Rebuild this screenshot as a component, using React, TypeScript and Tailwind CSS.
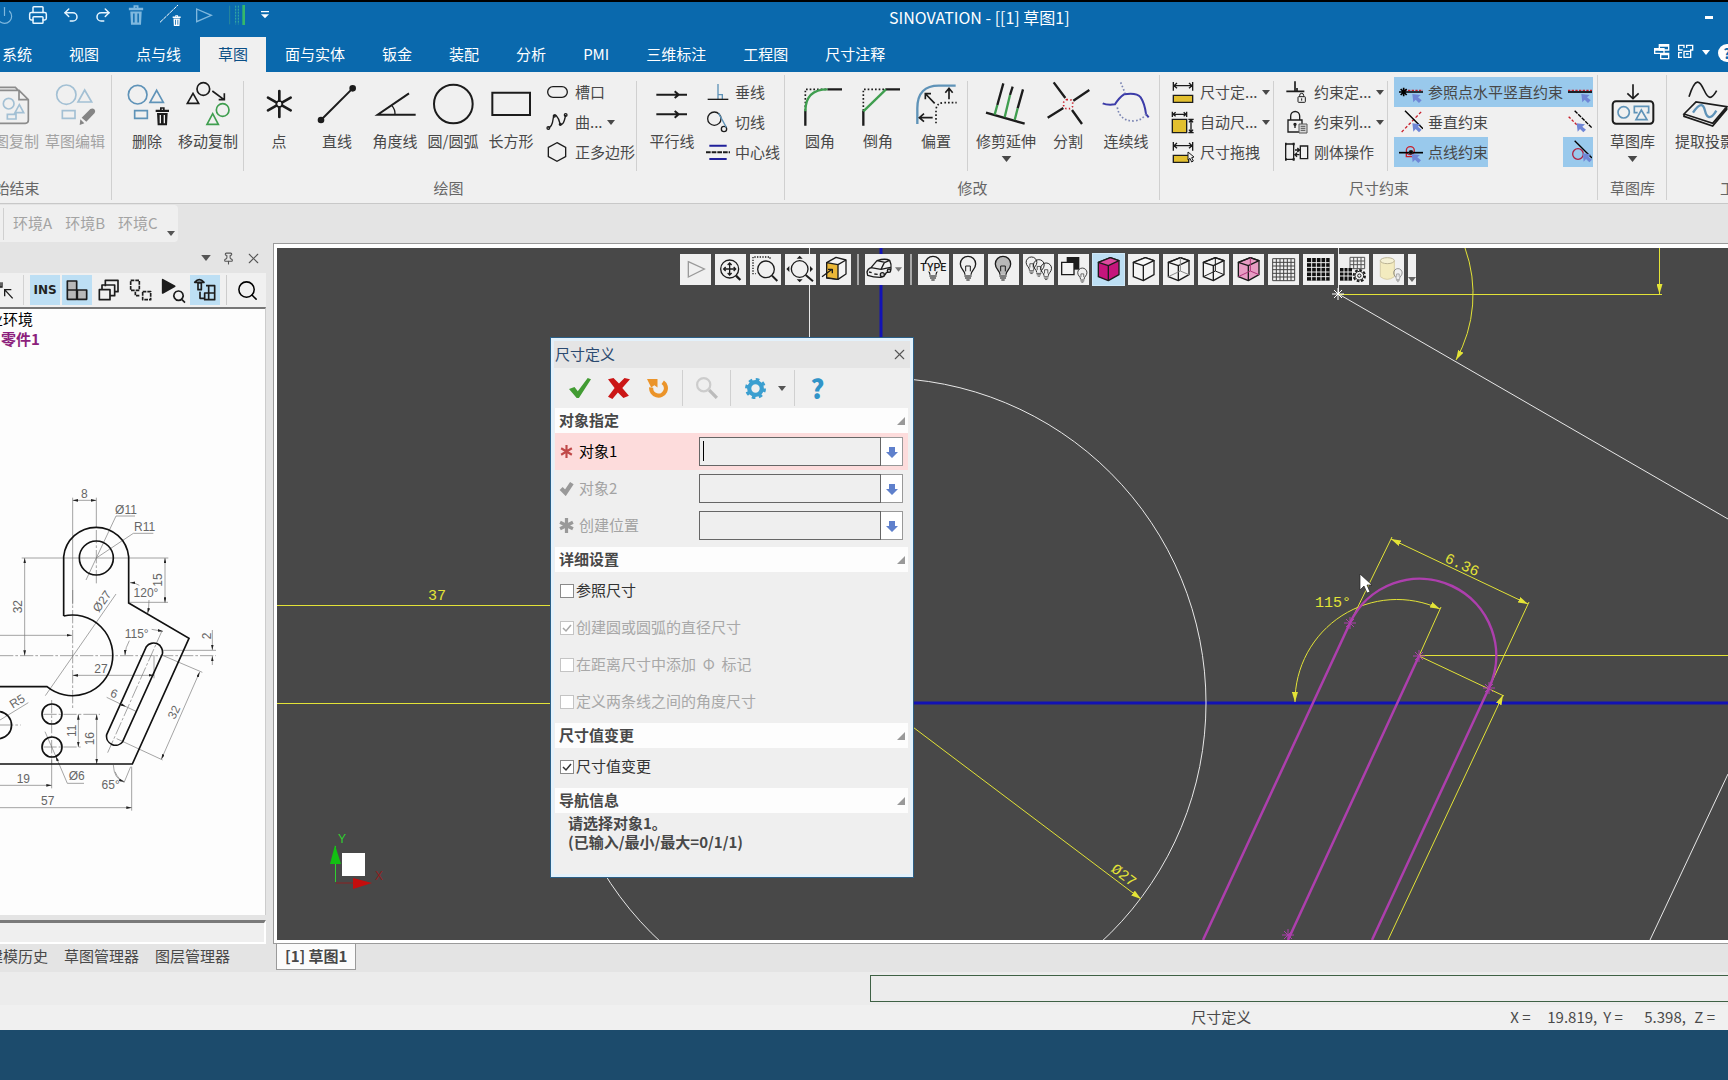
import React from "react";
import { Pin, Power, Printer, Redo2, Search, Undo2, X } from "lucide-react";

const INK = "#1c1c1c";
const GREEN = "#3f9e4f";
const STEEL = "#5f93b8";
const YELLOW = "#e3e337";
const MAGENTA = "#ad3fad";

const TRASH = (
  <path d="M0 8h40v7H0zM13 8V1h14v7h-5V5h-4v3zM4 18h32l-2 37H6zM12 24v25h4V24zM24 24v25h4V24z" fillRule="evenodd" />
);

const POINTER = <path d="M0 0l25 3-8 7 11 9-8 8-10-10-7 8z" fill="#6f86d6" stroke="none" />;

const LOCK = (
  <g fill="#f0f0f0" stroke={INK} strokeWidth="3">
    <path d="M6 12V8a6 6 0 0 1 12 0v4" fill="none" />
    <rect x="1" y="12" width="22" height="17" rx="2" />
    <path d="M12 17v7" />
  </g>
);

// drawn on a 132 unit grid
const BIG: Record<string, React.ReactNode> = {
  copySketch: (
    <g fill="none" stroke="#8c8c8c" strokeWidth="5">
      <path d="M20 22h65l8 8M30 31h66l28 28v62q0 9-9 9H30zM96 31v28h28" />
      <g stroke="#a3c0d4">
        <circle cx="65" cy="71" r="16" />
        <path d="M97 74l13 24H84zM61 103h26v14H61z" />
      </g>
    </g>
  ),
  editSketch: (
    <g fill="none" stroke="#a3c0d4" strokeWidth="5">
      <circle cx="40" cy="44" r="29" />
      <path d="M95 30l21 36H75zM28 92h38v23H28z" />
      <path d="M86 113l26-26q7-4 12 1t1 11l-25 26zM82 118l12 12-14 5z" fill="#858585" stroke="none" />
    </g>
  ),
  remove: (
    <g fill="none" stroke={STEEL} strokeWidth="5">
      <circle cx="38" cy="44" r="28" />
      <path d="M95 31l20 36H75zM29 92h38v23H29z" />
      <g transform="translate(92 81)" fill={INK} stroke="none">{TRASH}</g>
    </g>
  ),
  move: (
    <g fill="none" stroke={INK} strokeWidth="5">
      <circle cx="52" cy="27" r="19" />
      <path d="M21 40l17 30H4zM79 33l35 26M98 59h17V40" />
      <g stroke={GREEN}>
        <circle cx="110" cy="90" r="19" />
        <path d="M80 101l17 32H63z" />
      </g>
    </g>
  ),
  point: (
    <g fill="none" stroke={INK} strokeWidth="8" strokeLinecap="round">
      <circle cx="67" cy="72" r="9" strokeWidth="5" />
      <path d="M67 33v29M67 82v29M33 53l25 14M76 77l25 14M101 53L76 67M58 77L33 91" />
    </g>
  ),
  line: (
    <g stroke={INK} strokeWidth="6" fill={INK}>
      <path d="M18 120L113 25" />
      <circle cx="18" cy="120" r="7" />
      <circle cx="113" cy="25" r="7" />
    </g>
  ),
  angle: (
    <g fill="none" stroke={INK}>
      <path d="M108 40L14 104h114" strokeWidth="6" />
      <path d="M56 76q11 12 10 28" strokeWidth="4" />
    </g>
  ),
  circle: <circle cx="67" cy="72" r="58" fill="none" stroke={INK} strokeWidth="6" />,
  rect: <path d="M10 38h113v67H10z" fill="none" stroke={INK} strokeWidth="6" />,
  parallel: (
    <path d="M19 44h92M19 103h92M74 34l12 10-12 10M74 93l12 10-12 10" fill="none" stroke={INK} strokeWidth="6" />
  ),
  fillet: (
    <g fill="none" strokeWidth="7" stroke={INK}>
      <path d="M22 92V28h66" strokeDasharray="5 6" strokeWidth="5" />
      <path d="M22 92v45M88 28h44" />
      <path d="M22 94Q22 28 88 28" stroke={GREEN} />
    </g>
  ),
  chamfer: (
    <g fill="none" strokeWidth="7" stroke={INK}>
      <path d="M22 92V28h66" strokeDasharray="5 6" strokeWidth="5" />
      <path d="M22 92v45M88 28h44" />
      <path d="M22 94L90 28" stroke={GREEN} />
    </g>
  ),
  offset: (
    <g fill="none" strokeWidth="5" stroke={INK}>
      <path d="M10 132V85Q10 15 78 17h47" stroke={STEEL} strokeWidth="7" />
      <path d="M66 130V92q0-24 24-24h38" strokeDasharray="5 6" />
      <path d="M105 58V26M94 38l11-13 11 13M62 70L35 42M34 58V41h17M56 113H17M30 101l-14 12 14 12" />
    </g>
  ),
  trim: (
    <g fill="none" strokeWidth="7" stroke={INK}>
      <path d="M6 98l116 33M58 10L40 75M86 20l-8 25M117 28l-16 57" />
      <path d="M40 75l-8 29M78 45l-16 67M101 85l-9 35" stroke={GREEN} />
    </g>
  ),
  split: (
    <g fill="none" strokeWidth="7" stroke={INK}>
      <path d="M23 7l35 47M130 30L82 62M5 113l47-29M78 90l30 42" />
      <rect x="53" y="59" width="27" height="27" rx="9" stroke="#c8202c" strokeWidth="5" strokeDasharray="4 7" />
    </g>
  ),
  chain: (
    <g fill="none" strokeWidth="6" stroke="#3c3ca8">
      <path d="M-4 70q14 6 37 3 12-20 27-30 38-6 50 9 12 18 16 50l8 10" />
      <path d="M50 7l13 32M40 82q6 40 48 41 30-2 40-26" stroke="#7c86b4" strokeWidth="5" strokeDasharray="5 6" />
    </g>
  ),
  library: (
    <g fill="none" strokeWidth="5" stroke={INK}>
      <path d="M66 13v42M49 40l17 16 17-16" />
      <rect x="5" y="64" width="122" height="67" rx="10" strokeWidth="6" />
      <circle cx="38" cy="97" r="17" stroke={STEEL} />
      <path d="M80 98H70V79h43v19h-6M91 90l17 29H75z" stroke={STEEL} />
    </g>
  ),
  project: (
    <g fill="none" strokeWidth="5" stroke={INK}>
      <path d="M18 50C38-12 50 2 63 30s22 30 38 2" />
      <path d="M3 102l36-36 92 14-42 50zM3 102v7l86 29 42-50v-8" />
      <path d="M30 98C54 62 62 76 66 92s14 34 34 0" stroke={STEEL} strokeWidth="7" />
    </g>
  ),
};

// drawn on a 72 unit grid
const SMALL: Record<string, React.ReactNode> = {
  slot: <rect x="5" y="20" width="59" height="32" rx="16" />,
  spline: (
    <g>
      <path d="M7 54q12-5 14-25t10-12 11 24q10 10 17-26" />
      <circle cx="7" cy="54" r="4" />
      <circle cx="25" cy="18" r="3" />
      <circle cx="43" cy="43" r="3" />
      <circle cx="59" cy="15" r="4" />
    </g>
  ),
  polygon: <path d="M33 8l26 14v28L33 64 7 50V22z" />,
  perpendicular: (
    <g>
      <path d="M36 12v46M37 44h12v14" stroke={STEEL} />
      <path d="M5 58h62" />
    </g>
  ),
  tangent: (
    <g>
      <circle cx="25" cy="26" r="20" />
      <circle cx="54" cy="57" r="8" />
      <path d="M38 10l23 42" stroke={STEEL} />
    </g>
  ),
  centre: (
    <g strokeWidth="6">
      <path d="M10 17h52M10 57h52" stroke="#20209a" />
      <path d="M0 37h72" strokeDasharray="14 3" />
    </g>
  ),
  dimDefine: (
    <g>
      <path d="M7 6v26M65 6v26M9 17h54M18 9l-9 8 9 8M54 9l9 8-9 8" />
      <path d="M7 46h58v21H7z" fill="#e2bf2f" />
    </g>
  ),
  dimAuto: (
    <g>
      <path d="M4 5v16M47 5v16M6 13h39M14 7l-8 6 8 6M38 7l7 6-7 6M52 28h16M52 68h16M60 30v36M54 37l6-8 6 8M54 59l6 8 6-8" />
      <path d="M4 28h43v40H4z" fill="#e2bf2f" />
    </g>
  ),
  dimDrag: (
    <g>
      <path d="M7 6v26M65 6v26M9 17h54M18 9l-9 8 9 8M54 9l9 8-9 8" />
      <path d="M7 46h46v21H7z" fill="#e2bf2f" />
      <path d="M51 36v24l6-5 5 11 5-3-5-10 7-2z" fill="#f0f0f0" strokeWidth="3" />
    </g>
  ),
  conDefine: (
    <g>
      <path d="M30 4v30M36 24v10M4 34h54" strokeWidth="5" />
      <g transform="translate(38 38)">{LOCK}</g>
    </g>
  ),
  conList: (
    <g>
      <path d="M17 30V18a13 13 0 0 1 27 0v12" />
      <path d="M9 30h42v36H9zM30 40v14" />
      <circle cx="30" cy="43" r="3" />
      <path d="M42 42h24v27H42zM47 49h14M47 55h14M47 61h14" fill="#d8d8d8" stroke="#555" strokeWidth="3" />
    </g>
  ),
  rigid: (
    <g>
      <path d="M2 12h24v46H2zM46 18h22v38H46zM30 30h13M30 44h13M37 24l6 6-6 6M36 38l-6 6 6 6" />
      <path d="M0 12h5M23 12h6M0 58h5M23 58h6" strokeWidth="8" />
    </g>
  ),
  refPoint: (
    <g>
      <path d="M16 31h56" stroke="#c8202c" strokeWidth="4" strokeDasharray="7 4" />
      <path d="M0 36h72M14 23v26M5 27l18 18M23 27L5 45" strokeWidth="5" stroke="#000" />
      <g transform="translate(40 42)">{POINTER}</g>
    </g>
  ),
  refLine: (
    <g>
      <path d="M0 31h72" stroke="#c8202c" strokeWidth="4" strokeDasharray="7 4" />
      <path d="M0 36h72" strokeWidth="5" stroke="#000" />
      <g transform="translate(40 42)">{POINTER}</g>
    </g>
  ),
  vertical: (
    <g>
      <path d="M8 66L70 2" stroke="#c8202c" strokeDasharray="9 6" />
      <path d="M18 2l54 54" stroke="#000" />
      <g transform="translate(40 40)">{POINTER}</g>
    </g>
  ),
  parallelCon: (
    <g>
      <path d="M2 20l26 26" stroke="#c8202c" strokeDasharray="8 5" />
      <path d="M20 2l52 52" stroke="#000" strokeDasharray="12 3" />
      <g transform="translate(26 40)">{POINTER}</g>
    </g>
  ),
  pointLine: (
    <g>
      <circle cx="34" cy="32" r="12" stroke="#c8202c" />
      <path d="M22 36v14h24" stroke="#c8202c" />
      <path d="M0 38h72" stroke="#000" strokeWidth="5" />
      <circle cx="36" cy="37" r="5" fill="#000" />
      <g transform="translate(38 42)">{POINTER}</g>
    </g>
  ),
  tangentCon: (
    <g>
      <circle cx="30" cy="42" r="16" stroke="#b02040" />
      <path d="M20 2l52 52" stroke="#000" />
      <g transform="translate(44 40)">{POINTER}</g>
    </g>
  ),
};

const BULB = (
  <g fill="none" stroke={INK} strokeWidth="4">
    <path d="M36 62c0-12-14-16-14-32a22 22 0 0 1 46 0c0 16-14 20-14 32" />
    <path d="M34 66h22M36 72h18M40 78h10" stroke="#555" />
    <path d="M38 52V36h14v16" strokeWidth="3" />
  </g>
);

const cube = (fill: string, top: string, wire?: string) => (
  <g stroke={INK} strokeWidth="4" strokeLinejoin="round">
    <path d="M16 25L52 11l26 9v42L46 80 16 68z" fill={fill} />
    <path d="M16 25L52 11l26 9-32 15z" fill={top} />
    <path d="M46 35v45" />
    {wire && <path d="M52 11v40L16 68M52 51l26 11" fill="none" stroke={wire} strokeWidth="3" />}
  </g>
);

const GRID = "M14 14h66v66H14zM25 14v66M36 14v66M47 14v66M58 14v66M69 14v66M14 25h66M14 36h66M14 47h66M14 58h66M14 69h66";

// drawn on a 93 unit grid
const VIEW: Record<string, React.ReactNode> = {
  play: <path d="M25 23l48 22-48 24z" fill="none" stroke="#9a9a9a" strokeWidth="4" />,
  zoomAll: (
    <g fill="none" stroke={INK} strokeWidth="4">
      <circle cx="44" cy="45" r="27" />
      <path d="M63 65l13 13" strokeWidth="7" />
      <path d="M44 27v36M26 45h36M38 33l6-6 6 6M38 57l6 6 6-6M32 39l-6 6 6 6M56 39l6 6-6 6" strokeWidth="4" />
    </g>
  ),
  zoomWindow: (
    <g fill="none" stroke={INK} strokeWidth="4">
      <path d="M60 14V9H9v50h8" strokeDasharray="4 4" />
      <circle cx="48" cy="46" r="25" />
      <path d="M66 65l16 16" strokeWidth="6" />
    </g>
  ),
  zoomFit: (
    <g fill="none" stroke={INK} strokeWidth="4">
      <circle cx="44" cy="45" r="25" />
      <path d="M62 63l22 19" strokeWidth="6" />
      <path d="M44 5l9 9H35zM44 85l9-9H35zM4 45l9-9v18zM84 45l-9-9v18z" fill={INK} stroke="none" />
    </g>
  ),
  face: (
    <g fill="none" stroke={INK} strokeWidth="4" strokeLinejoin="round">
      <path d="M20 26L48 10l30 8v42L54 76l-34-4z" fill="#f4f4f4" />
      <path d="M20 26l34 6v44l-34-5z" fill="#ecb838" />
      <path d="M54 32l24-14M6 68l30-22M24 46h13v12" />
    </g>
  ),
  bulb: BULB,
  bulbOff: (
    <g>
      <path d="M36 62c0-12-14-16-14-32a22 22 0 0 1 46 0c0 16-14 20-14 32z" fill="#b8b8b8" />
      {BULB}
    </g>
  ),
  bulbType: (
    <g>
      {BULB}
      <path d="M6 29h82v24H6z" fill="#f0f0f0" />
      <text x="7" y="52" fontSize="32" fontFamily="Roboto" fontWeight="500" fill={INK}>TYPE</text>
    </g>
  ),
  bulbs: (
    <g>
      <g transform="translate(-6 4) scale(.7)">{BULB}</g>
      <g transform="translate(16 12) scale(.7)">{BULB}</g>
      <g transform="translate(38 22) scale(.7)">{BULB}</g>
    </g>
  ),
  layers: (
    <g>
      <path d="M26 9h38v38H26z" fill={INK} />
      <path d="M11 25h37v37H11z" fill="#f4f4f4" stroke={INK} strokeWidth="4" />
      <g transform="translate(46 38) scale(.6)">{BULB}</g>
    </g>
  ),
  solid: cube("#c5157c", "#dd4a9e"),
  plain: cube("#f4f4f4", "#fafafa"),
  hidden: cube("#f4f4f4", "none", "#888"),
  wire: cube("#f4f4f4", "none", INK),
  shadedWire: cube("#e79cc3", "none", "#b0357a"),
  grid: <path d={GRID} fill="none" stroke="#444" strokeWidth="3" />,
  gridDark: (
    <g>
      <path d="M12 12h68v68H12z" fill="#111" />
      <path d="M26 12v68M40 12v68M54 12v68M68 12v68M12 26h68M12 40h68M12 54h68M12 68h68" stroke="#eee" strokeWidth="3" />
    </g>
  ),
  gridSet: (
    <g>
      <path d="M36 10h44v34H36zM47 10v34M58 10v34M69 10v34M36 21h44M36 32h44" fill="none" stroke="#555" strokeWidth="3" />
      <path d="M6 42h36v38H6z" fill="#111" />
      <path d="M18 42v38M30 42v38M6 54h36M6 66h36" stroke="#eee" strokeWidth="3" />
      <circle cx="64" cy="65" r="17" fill="none" stroke={INK} strokeWidth="6" strokeDasharray="8 5" />
      <circle cx="64" cy="65" r="13" fill="#eee" stroke={INK} strokeWidth="3" />
      <circle cx="64" cy="65" r="5" fill="none" stroke={INK} strokeWidth="3" />
    </g>
  ),
  cylinder: (
    <g opacity=".6">
      <path d="M22 20v48q20 16 42 0V20" fill="#f6e9a0" stroke="#c8b878" strokeWidth="3" />
      <ellipse cx="43" cy="20" rx="21" ry="9" fill="#f9f2c4" stroke="#998c58" strokeWidth="3" />
      <g transform="translate(50 40) scale(.55)">{BULB}</g>
    </g>
  ),
};

const Caret = ({ className = "" }: { className?: string }) => (
  <svg viewBox="0 0 8 5" className={`h-[5px] w-2 shrink-0 ${className}`}>
    <path d="M0 0h8L4 5z" fill="currentColor" />
  </svg>
);

interface BigButtonProps {
  icon: string;
  label: string;
  width?: string;
  muted?: boolean;
  menu?: boolean;
}

const BigButton = ({ icon, label, width = "w-[58px]", muted, menu }: BigButtonProps) => (
  <button className={`flex shrink-0 flex-col items-center pt-[3px] whitespace-nowrap ${width} ${muted ? "text-[#a3a3a3]" : "text-[#484848]"}`}>
    <svg viewBox="0 0 132 132" className="size-11 overflow-visible">{BIG[icon]}</svg>
    <span className="mt-[7px] leading-5">{label}</span>
    {menu && <Caret className="mt-[5px] h-[6px] w-[11px]" />}
  </button>
);

interface SmallButtonProps {
  icon: string;
  label?: string;
  menu?: boolean;
  active?: boolean;
  className?: string;
}

const SmallButton = ({ icon, label, menu, active, className = "" }: SmallButtonProps) => (
  <button aria-label={label || icon} className={`flex h-[30px] items-center whitespace-nowrap text-[#484848] ${active ? "bg-[#99c9ec]" : ""} ${className}`}>
    <svg viewBox="0 0 72 72" className="size-6 shrink-0" fill="none" stroke={INK} strokeWidth="4">
      {SMALL[icon]}
    </svg>
    {label && <span className="ml-[5px]">{label}</span>}
    {menu && <Caret className="ml-1" />}
  </button>
);

const Divider = () => <div className="mt-1 h-[90px] w-px shrink-0 bg-[#d0d0d0]" />;

const Group = ({ title, className = "", children }: { title: string; className?: string; children: React.ReactNode }) => (
  <section className={`relative shrink-0 pt-[5px] after:absolute after:top-[3px] after:right-0 after:h-[125px] after:w-px after:bg-[#d0d0d0] ${className}`}>
    <div className="flex h-24 items-start">{children}</div>
    <h2 className="text-center leading-[30px] whitespace-nowrap text-[#666]">{title}</h2>
  </section>
);

const TitleBar = () => (
  <header className="border-t-2 border-black bg-[#0a69ad] text-white">
    <div className="relative flex h-[35px] items-start">
      <div className="flex h-[26px] w-[269px] items-center justify-end gap-[14px] overflow-hidden text-[#e8f6ff]">
        <button aria-label="关闭" className="text-[#7fb8de]"><Power size={19} strokeWidth={1.5} /></button>
        <button aria-label="打印"><Printer size={20} strokeWidth={1.8} /></button>
        <button aria-label="撤销"><Undo2 size={18} /></button>
        <button aria-label="重做"><Redo2 size={18} /></button>
        <button aria-label="删除">
          <svg viewBox="-8 0 56 56" className="size-5" fill="#7fb8de">{TRASH}</svg>
        </button>
        <button aria-label="删除线">
          <svg viewBox="0 0 60 60" className="size-5 overflow-visible">
            <path d="M0 52L54 0" stroke="#fff" strokeWidth="3" strokeDasharray="12 2" />
            <g transform="translate(38 30) scale(.6)" fill="#fff">{TRASH}</g>
          </svg>
        </button>
        <button aria-label="播放">
          <svg viewBox="0 0 57 60" className="h-5 w-[19px]">
            <path d="M8 12l44 19L8 50z" fill="none" stroke="#7fb8de" strokeWidth="4" />
          </svg>
        </button>
        <button aria-label="线型">
          <svg viewBox="0 0 60 60" className="size-5">
            <path d="M8 2v56" stroke="#2a8a9a" strokeWidth="3" />
            <path d="M26 2v56M34 2v56" stroke="#3ab0a0" strokeWidth="3" strokeDasharray="6 3" />
            <path d="M50 0v60" stroke="#35b86a" strokeWidth="8" />
          </svg>
        </button>
        <button aria-label="更多" className="w-3">
          <svg viewBox="0 0 24 24" className="size-2"><path d="M0 0h24v4H0zM0 10h24L12 22z" fill="#fff" /></svg>
        </button>
      </div>
      <h1 className="absolute top-[3px] left-[889px] text-base leading-6 whitespace-nowrap">SINOVATION - [[1] 草图1]</h1>
      <button aria-label="最小化" className="mt-[14px] mr-[15px] ml-auto h-[3px] w-2 bg-white" />
    </div>
    <nav className="flex h-[35px] items-stretch gap-px overflow-hidden">
      {["系统", "视图", "点与线", "草图", "面与实体", "钣金", "装配", "分析", "PMI", "三维标注", "工程图", "尺寸注释"].map((tab) => (
        <button
          key={tab}
          className={`shrink-0 px-[18px] first:pl-[2px] ${tab === "草图" ? "bg-[#f0f0f0] text-[#0b4f86]" : ""}`}
        >
          {tab}
        </button>
      ))}
      <div className="-mr-2 ml-auto flex items-center gap-2 pb-1">
        <svg viewBox="0 0 48 48" className="mb-[2px] size-4" fill="none" stroke="#fff" strokeWidth="4">
          <path d="M16 2h28v16H16zM2 14h28v14H2zM20 28h24v16H20z" fill="#0a69ad" />
          <path d="M16 5h28M2 17h28M20 31h24" strokeWidth="6" />
        </svg>
        <svg viewBox="0 0 48 48" className="mb-[2px] size-4" fill="none" stroke="#fff" strokeWidth="4">
          <path d="M14 18H2V4h16v8M26 12V4h18v14h-8M12 40H2V26h10M18 22h20v18H18zM24 30h8" />
        </svg>
        <Caret />
        <button aria-label="帮助" className="size-[18px] rounded-full bg-white text-sm leading-[18px] font-bold text-[#0a69ad]">?</button>
      </div>
    </nav>
  </header>
);

const Ribbon = () => (
  <div className="flex overflow-hidden border-b border-[#c8c8c8] bg-[#f0f0f0]">
    <Group title="开始结束" className="-ml-[93px] w-[205px]">
      <div className="ml-auto flex pr-1">
        <BigButton icon="copySketch" label="草图复制" width="w-[66px]" muted />
        <BigButton icon="editSketch" label="草图编辑" width="w-[66px]" muted />
      </div>
    </Group>
    <Group title="绘图" className="w-[673px]">
      <div className="flex w-[131px] pl-[6px]">
        <BigButton icon="remove" label="删除" />
        <BigButton icon="move" label="移动复制" width="w-16" />
      </div>
      <Divider />
      <div className="flex pl-[6px]">
        <BigButton icon="point" label="点" />
        <BigButton icon="line" label="直线" />
        <BigButton icon="angle" label="角度线" />
        <BigButton icon="circle" label="圆/圆弧" />
        <BigButton icon="rect" label="长方形" />
      </div>
      <div className="w-[96px] pl-[6px]">
        <SmallButton icon="slot" label="槽口" />
        <SmallButton icon="spline" label="曲..." menu />
        <SmallButton icon="polygon" label="正多边形" />
      </div>
      <Divider />
      <div className="flex pl-[6px]">
        <BigButton icon="parallel" label="平行线" />
        <div className="pl-[5px]">
          <SmallButton icon="perpendicular" label="垂线" />
          <SmallButton icon="tangent" label="切线" />
          <SmallButton icon="centre" label="中心线" />
        </div>
      </div>
    </Group>
    <Group title="修改" className="w-[375px]">
      <div className="flex w-[182px] pl-[6px]">
        <BigButton icon="fillet" label="圆角" />
        <BigButton icon="chamfer" label="倒角" />
        <BigButton icon="offset" label="偏置" />
      </div>
      <Divider />
      <div className="flex pl-[6px]">
        <BigButton icon="trim" label="修剪延伸" width="w-16" menu />
        <BigButton icon="split" label="分割" width="w-[60px]" />
        <BigButton icon="chain" label="连续线" width="w-14" />
      </div>
    </Group>
    <Group title="尺寸约束" className="w-[438px]">
      <div className="w-[113px] pl-[11px]">
        <SmallButton icon="dimDefine" label="尺寸定..." menu />
        <SmallButton icon="dimAuto" label="自动尺..." menu />
        <SmallButton icon="dimDrag" label="尺寸拖拽" />
      </div>
      <Divider />
      <div className="w-[113px] pl-[11px]">
        <SmallButton icon="conDefine" label="约束定..." menu />
        <SmallButton icon="conList" label="约束列..." menu />
        <SmallButton icon="rigid" label="刚体操作" />
      </div>
      <Divider />
      <div className="ml-[6px] w-[199px]">
        <div className="flex bg-[#99c9ec]">
          <SmallButton icon="refPoint" label="参照点水平竖直约束" className="pl-[5px]" />
          <SmallButton icon="refLine" className="ml-auto pr-px" />
        </div>
        <div className="flex">
          <SmallButton icon="vertical" label="垂直约束" className="pl-[5px]" />
          <SmallButton icon="parallelCon" className="ml-auto pr-px" />
        </div>
        <div className="flex">
          <SmallButton icon="pointLine" label="点线约束" active className="pl-[5px]" />
          <SmallButton icon="tangentCon" active className="ml-auto pr-px pl-[5px]" />
        </div>
      </div>
    </Group>
    <Group title="草图库" className="w-[69px]">
      <BigButton icon="library" label="草图库" width="w-[69px]" menu />
    </Group>
    <Group title="工具" className="w-[136px]">
      <BigButton icon="project" label="提取投影" width="w-[76px]" />
    </Group>
  </div>
);

const EnvironmentBar = () => (
  <div className="flex h-[39px] bg-[#e4e4e4] pt-px">
    <div className="flex h-[37px] items-center gap-[13px] rounded-r bg-[#efefef] pr-[3px] pl-[3px] text-[#a3a3a3]">
      <div className="-mr-1 h-8 w-px bg-[#d0d0d0]" />
      <button>环境A</button>
      <button>环境B</button>
      <button>环境C</button>
      <Caret className="-ml-1 mt-5 text-[#555]" />
    </div>
  </div>
);

const DimText = ({ x, y, r = 0, children }: { x: number; y: number; r?: number; children: React.ReactNode }) => (
  <text x={x} y={y} transform={`rotate(${r} ${x} ${y})`} textAnchor="middle">{children}</text>
);

const PART_DIMS = [
  "M218 91h71",
  "M74 264v293",
  "M495 264v134",
  "M218 616h244",
  "M235 733v98",
  "M290 733v149",
  "M599 606L484 868",
];

const PART_LEADERS = [
  "M0 496h216",
  "M0 946h155",
  "M0 1013h395",
  "M637 480v60",
  "M637 585v-27",
  "M418 346q-12-8-28-8",
  "M447 390q0 22-4 40",
  "M388 512q-12 20-13 44",
  "M455 478l34 6",
  "M345 905q10 24 28 30",
  "M372 93L289 460",
  "M202 940L167 858",
  "M320 682l58 28",
];

const PartDrawing = () => (
  <svg viewBox="0 0 795 1080" className="h-[360px] w-[265px]" fill="none">
    <defs>
      <marker id="tip" viewBox="0 0 16 8" refX="16" refY="4" markerWidth="16" markerHeight="8" markerUnits="userSpaceOnUse" orient="auto-start-reverse">
        <path d="M0 0l16 4-16 4z" fill="#222" />
      </marker>
    </defs>
    <g stroke="#777" strokeWidth="2">
      <path d="M218 83v320M289 83v90M65 264h440M389 397h115M395 890v132M155 865v90M490 541h158M462 555v70" />
      <path d="M218 360v360M289 180v160M0 557h648M130 733h170M130 831h112M0 765h62M155 690v190M323 848L488 478" strokeDasharray="40 6 8 6" />
      <path d="M405 138h-57l-90 192M460 190h-60L289 264M348 372L136 677M85 698L0 750M135 785l32 73M202 940h50M378 710l30 14M350 806l138 64M490 557l117 50M372 938l20-48M340 885q2 42 32 51" />
      {PART_DIMS.map((d) => <path key={d} d={d} markerStart="url(#tip)" markerEnd="url(#tip)" />)}
      {PART_LEADERS.filter((d) => d !== "M372 93L289 460").map((d) => <path key={d} d={d} markerEnd="url(#tip)" />)}
    </g>
    <g stroke="#111" strokeWidth="5">
      <path d="M191 438V260a98 98 0 0 1 195 0v139l181 106-170 377H0M191 438a121 121 0 1 1-50 212H0" />
      <circle cx="289" cy="264" r="51" />
      <circle cx="156" cy="732" r="30" />
      <circle cx="156" cy="831" r="30" />
      <path d="M0 725a41 41 0 0 1 0 81M320 794L439 530a27 27 0 0 1 48 22L368 815a27 27 0 0 1-48-21z" />
    </g>
    <g fill="#666" fontFamily="Liberation Sans" fontSize="36">
      <DimText x={253} y={84}>8</DimText>
      <DimText x={378} y={131}>Ø11</DimText>
      <DimText x={434} y={183}>R11</DimText>
      <DimText x={487} y={330} r={-90}>15</DimText>
      <DimText x={438} y={380}>120°</DimText>
      <DimText x={67} y={410} r={-90}>32</DimText>
      <DimText x={316} y={401} r={-55}>Ø27</DimText>
      <DimText x={410} y={504}>115°</DimText>
      <DimText x={632} y={498} r={-90}>2</DimText>
      <DimText x={303} y={608}>27</DimText>
      <DimText x={338} y={682} r={20}>6</DimText>
      <DimText x={533} y={732} r={-65}>32</DimText>
      <DimText x={58} y={704} r={-32}>R5</DimText>
      <DimText x={227} y={782} r={-90}>11</DimText>
      <DimText x={283} y={806} r={-90}>16</DimText>
      <DimText x={230} y={930}>Ø6</DimText>
      <DimText x={70} y={938}>19</DimText>
      <DimText x={332} y={958}>65°</DimText>
      <DimText x={143} y={1005}>57</DimText>
    </g>
  </svg>
);

const panelTool = "flex size-[30px] shrink-0 items-center justify-center";

const PANEL_TOOLS = [
  { name: "零件", on: true, fill: "#b8b8b8", d: "M16 18h28v27H16zM16 45h28v28H16zM46 45h28v28H46z" },
  { name: "复制", d: "M34 34V16h38v34H60M24 46V30h38v32H50M16 44h32v30H16z" },
  { name: "展开", dash: "11 3", d: "M14 16h26v30H14zM28 50v12h12M50 50h24v24H50z" },
  { name: "播放搜索", d: "M62 48a14 14 0 1 1-1 0zM72 74l9 9" },
  { name: "结构", on: true, d: "M14 22q14-16 28 0zM24 24h10v20H24zM30 50v20h12M48 32h26v42H44V54h30M56 32v42" },
];

const SidePanel = () => (
  <aside className="flex w-[273px] shrink-0 flex-col bg-[#e4e4e4]">
    <div className="flex h-[30px] items-center justify-end gap-[10px] pr-[11px] text-[#555]">
      <button aria-label="菜单"><Caret className="h-[6px] w-3" /></button>
      <button aria-label="固定"><Pin size={13} /></button>
      <button aria-label="关闭面板"><X size={17} strokeWidth={1.5} /></button>
    </div>
    <div className="mr-[7px] flex h-[34px] items-center gap-[2px] overflow-hidden bg-[#f0f0f0]">
      <svg viewBox="0 0 72 90" className="mr-1 h-[30px] w-6 shrink-0" fill="none" stroke={INK} strokeWidth="4">
        <path d="M0 22v14h6V22M38 70L16 46M14 64V44h20" />
        <path d="M71 0v90" stroke="#ccc" strokeWidth="3" />
      </svg>
      <button className={`${panelTool} bg-[#bddff4] font-['DejaVu_Sans'] text-[12px] font-bold text-[#222]`}>INS</button>
      {PANEL_TOOLS.map((tool) => (
        <button key={tool.name} aria-label={tool.name} className={`${panelTool} ${tool.on ? "bg-[#bddff4]" : ""}`}>
          <svg viewBox="0 0 90 90" className="size-[30px]" fill={tool.fill || "none"} stroke={INK} strokeWidth="5" strokeLinejoin="round">
            <path d={tool.d} strokeDasharray={tool.dash} />
            {tool.name === "播放搜索" && <path d="M14 14l36 20-36 20z" fill={INK} />}
          </svg>
        </button>
      ))}
      <div className="ml-1 h-[30px] w-px shrink-0 bg-[#ccc]" />
      <button aria-label="查找" className={`${panelTool} ml-[3px]`}><Search size={23} strokeWidth={1.6} /></button>
    </div>
    <div className="mr-[7px] min-h-0 flex-1 overflow-hidden border-t-2 border-r border-t-[#777] border-r-[#ccc] bg-[#fdfdfd]">
      <div className="-ml-[27px] h-5 leading-5 text-black">作业环境</div>
      <div className="h-5 pl-px leading-5 font-bold text-[#8c1f7c]">零件1</div>
      <div className="h-[121px]" />
      <PartDrawing />
    </div>
    <div className="mt-[5px] mr-[7px] h-6 border-t-[3px] border-r-2 border-b-2 border-t-[#7a7a7a] border-r-white border-b-white bg-[#efefef]" />
    <div className="flex h-7 gap-4 overflow-hidden leading-[24px] whitespace-nowrap text-[#484848]">
      <button className="-ml-3 self-start">建模历史</button>
      <button className="self-start">草图管理器</button>
      <button className="self-start">图层管理器</button>
    </div>
  </aside>
);

const Star = ({ x, y, color }: { x: number; y: number; color: string }) => (
  <path d={`M${x - 6} ${y}h12M${x} ${y - 6}v12M${x - 4} ${y - 4}l8 8M${x + 4} ${y - 4}l-8 8`} stroke={color} strokeWidth="1" />
);

const SKETCH_LEADERS = [
  "M881 703l260 196",
  "M1659.500 248v46",
  "M1465 248a136 136 0 0 1-9 112",
  "M1388 940l115-245",
];

const SKETCH_DIMS = ["M1391 539l137 65", "M1295 702a102 102 0 0 1 145-93"];

const SketchView = () => (
  <svg viewBox="277 248 1451 692" preserveAspectRatio="xMidYMid slice" className="absolute inset-0 size-full" fill="none">
    <defs>
      <marker id="arrow" viewBox="0 0 10 6" refX="10" refY="3" markerWidth="10" markerHeight="6" markerUnits="userSpaceOnUse" orient="auto-start-reverse">
        <path d="M0 0l10 3-10 3z" fill={YELLOW} />
      </marker>
    </defs>
    <path d="M881 248v455h847" stroke="#1212b4" strokeWidth="3" />
    <g stroke="#e8e8e8" strokeWidth="1">
      <circle cx="881" cy="703" r="325" />
      <path d="M809.500 248v200M1338.500 248v46L1728 519M1728 774l-78 166" />
    </g>
    <g stroke={YELLOW} strokeWidth="1">
      <path d="M277 605.500h300M277 703.500h300M1338 294.500h324M1419 655.500h309M1350 623l42-86M1489 688l40-86M1419 656l22-49M1419 656l85 40" />
      {SKETCH_LEADERS.map((d) => <path key={d} d={d} markerEnd="url(#arrow)" />)}
      {SKETCH_DIMS.map((d) => <path key={d} d={d} markerStart="url(#arrow)" markerEnd="url(#arrow)" />)}
    </g>
    <path d="M1203 940l147-317a76 76 0 0 1 139 65l-117 252M1419 656l-131 284" stroke={MAGENTA} strokeWidth="2.500" />
    <Star x={1350} y={623} color={MAGENTA} />
    <Star x={1419} y={656} color={MAGENTA} />
    <Star x={1489} y={688} color={MAGENTA} />
    <Star x={1288} y={935} color={MAGENTA} />
    <Star x={1338} y={294} color="#fff" />
    <g fill={YELLOW} fontFamily="Liberation Mono" fontSize="15">
      <DimText x={437} y={600}>37</DimText>
      <DimText x={1460} y={569} r={25}>6.36</DimText>
      <DimText x={1333} y={607}>115°</DimText>
      <DimText x={1121} y={879} r={37}>Ø27</DimText>
    </g>
    <path d="M335.500 846v36" stroke="#2fd02f" />
    <path d="M335 845l6 19h-11z" fill="#12c012" />
    <path d="M336 883h20" stroke="#8a2020" />
    <path d="M353 878l19 5-19 6z" fill="#c40d0d" />
    <path d="M342 853h23v23h-23z" fill="#fff" />
    <text x="338" y="843" fontSize="12" fontFamily="Liberation Sans" fill="#2fd02f">Y</text>
    <text x="375" y="880" fontSize="12" fontFamily="Liberation Sans" fill="#8f1f1f">X</text>
    <path d="M1360 574v16l4-4 3 7 3-1-3-7h5z" fill="#fff" stroke="#222" strokeWidth=".7" />
  </svg>
);

const ViewButton = ({ icon, active }: { icon: string; active?: boolean }) => (
  <button aria-label={icon} className={`size-[31px] shrink-0 ${active ? "bg-[#bddff4] ring-1 ring-[#cfe8f8]" : "bg-[#f0f0f0]"}`}>
    <svg viewBox="0 0 93 93" className="size-[31px]">{VIEW[icon]}</svg>
  </button>
);

const ViewToolbar = () => (
  <div className="absolute top-[6px] left-[403px] flex gap-1">
    {["play", "zoomAll", "zoomWindow", "zoomFit", "face"].map((icon) => <ViewButton key={icon} icon={icon} />)}
    <div className="mx-0.5 w-0.5 bg-[#a8a8a8]" />
    <button aria-label="视角" className="flex h-[31px] w-[39px] items-center bg-[#f0f0f0] text-[#777]">
      <svg viewBox="0 0 90 93" className="h-[31px] w-[30px]" fill="none" stroke={INK} strokeWidth="4" strokeLinejoin="round">
        <path d="M6 54q2-10 12-13l18-21q24-8 38-1 6 12 4 26-2 8-14 11-6 12-18 14-22 0-38-6zM18 41l30 5 10-20M48 46l28-6M36 20l24 5 14-6" />
        <path d="M12 54l8 2M28 60l10 1" />
        <circle cx="52" cy="62" r="6" fill="#ccc" />
        <circle cx="72" cy="50" r="5" fill="#ccc" />
      </svg>
      <Caret className="w-[7px]" />
    </button>
    <div className="mx-0.5 w-0.5 bg-[#a8a8a8]" />
    {["bulbType", "bulb", "bulbOff", "bulbs", "layers", "solid", "plain", "hidden", "wire", "shadedWire", "grid", "gridDark", "gridSet", "cylinder"].map(
      (icon) => <ViewButton key={icon} icon={icon} active={icon === "solid"} />
    )}
    <button aria-label="更多视图" className="flex w-2 items-end bg-[#f0f0f0] pb-[3px] text-[#666]"><Caret /></button>
  </div>
);

const SectionTitle = ({ children }: { children: React.ReactNode }) => (
  <h3 className="flex h-[25px] items-center justify-between bg-[#fdfdfd] pr-[3px] pl-1 font-bold text-[#484848]">
    {children}
    <svg viewBox="0 0 8 8" className="size-2"><path d="M8 0v8H0z" fill="#999" /></svg>
  </h3>
);

const MARKS: Record<string, React.ReactNode> = {
  red: <path d="M7 1v12M2 4l10 6M12 4L2 10" stroke="#c04848" strokeWidth="2" />,
  tick: <path d="M2 7l4 4 6-9" stroke="#999" strokeWidth="4" fill="none" />,
  gray: <path d="M7 0v14M1 4l12 6M13 4L1 10" stroke="#999" strokeWidth="3" />,
};

const Field = ({ id, label, mark, active }: { id: string; label: string; mark: string; active?: boolean }) => (
  <div className={`flex h-[37px] items-center pr-[5px] pl-1 ${active ? "bg-[#fddcdc]" : ""}`}>
    <svg viewBox="0 0 14 14" className="size-[15px]">{MARKS[mark]}</svg>
    <label htmlFor={id} className={`ml-[5px] flex-1 ${active ? "text-black" : "text-[#a3a3a3]"}`}>{label}</label>
    <div className="relative flex">
      <input id={id} type="text" className="h-[29px] w-[182px] border border-[#666] bg-[#efefef] px-1 outline-none" />
      {active && <span className="absolute top-1 left-1 h-5 w-px bg-black" />}
      <button aria-label={`${label} 选择`} className="flex h-[29px] w-[22px] items-center justify-center border border-l-0 border-[#999] bg-white">
        <svg viewBox="0 0 12 12" className="size-3"><path d="M3 1h6v5h3l-6 6-6-6h3z" fill="#5f80cc" /></svg>
      </button>
    </div>
  </div>
);

const Check = ({ label, checked, disabled }: { label: string; checked?: boolean; disabled?: boolean }) => (
  <label className={`flex h-[37px] items-center gap-[2px] pl-[5px] whitespace-pre ${disabled ? "text-[#a8a8a8]" : "text-[#333]"}`}>
    <span className="relative size-[14px]">
      <input
        type="checkbox"
        defaultChecked={checked}
        disabled={disabled}
        className={`peer block size-[14px] appearance-none border bg-white ${disabled ? "border-[#c4c4c4]" : "border-[#8a8a8a]"}`}
      />
      <svg viewBox="0 0 14 14" className="pointer-events-none absolute inset-0 hidden size-[14px] peer-checked:block">
        <path d="M3 7l3 3 5-6" fill="none" stroke="currentColor" strokeWidth="1.500" />
      </svg>
    </span>
    {label}
  </label>
);

const DimensionDialog = () => (
  <div role="dialog" aria-label="尺寸定义" className="absolute top-[90px] left-[274px] h-[539px] w-[362px] border-[3px] border-[#e3f1fb] bg-[#efefef] ring-1 ring-[#2b5f86]">
    <div className="flex h-[27px] items-center justify-between bg-[#e5e5e5] pr-[2px] pl-[1px] text-[#2c4a70]">
      <h2>尺寸定义</h2>
      <button aria-label="关闭对话框" className="text-[#555]"><X size={17} strokeWidth={1.5} /></button>
    </div>
    <div className="flex h-10 items-center pl-[15px]">
      <button aria-label="确定" className="w-[39px]">
        <svg viewBox="0 0 20 20" className="size-[22px]"><path d="M0 11l5-2 3 4L17 1l3 1L9 19H7z" fill="#429c33" /></svg>
      </button>
      <button aria-label="取消" className="w-[39px]">
        <svg viewBox="0 0 20 20" className="size-[22px]"><path d="M0 2l5-1 5 5 5-5 5 1-7 8 6 7-5 2-5-5-5 6-4-2 6-8z" fill="#cb1616" /></svg>
      </button>
      <button aria-label="重置" className="w-[35px]">
        <svg viewBox="0 0 20 20" className="size-[21px]">
          <path d="M15 4a7 7 0 1 1-11 5" fill="none" stroke="#eb942a" strokeWidth="4" />
          <path d="M0 1h10v8L7 7 4 9z" fill="#eb942a" />
        </svg>
      </button>
      <div className="h-9 w-px bg-[#d0d0d0]" />
      <button aria-label="预览" className="flex w-[47px] justify-center">
        <svg viewBox="0 0 20 20" className="size-[22px]" fill="none" stroke="#ccc" strokeWidth="2">
          <circle cx="7" cy="7" r="6" />
          <path d="M12 12l7 7" stroke="#bbb" strokeWidth="3" />
        </svg>
      </button>
      <div className="h-9 w-px bg-[#d0d0d0]" />
      <button aria-label="设置" className="flex w-[63px] items-center justify-between pr-2 pl-[14px] text-[#555]">
        <svg viewBox="0 0 20 20" className="size-[21px]" fill="none" stroke="#3b9fd0">
          <circle cx="10" cy="10" r="6" strokeWidth="4" />
          <circle cx="10" cy="10" r="8" strokeWidth="4" strokeDasharray="3.200 3.080" />
        </svg>
        <Caret />
      </button>
      <div className="h-9 w-px bg-[#d0d0d0]" />
      <button aria-label="对话框帮助" className="w-[45px] text-[26px] leading-none font-black text-[#3194c8]">?</button>
    </div>
    <div className="mr-[2px] ml-[1px]">
      <SectionTitle>对象指定</SectionTitle>
      <div className="h-[114px]">
        <Field id="target1" label="对象1" mark="red" active />
        <Field id="target2" label="对象2" mark="tick" />
        <Field id="place" label="创建位置" mark="gray" />
      </div>
      <SectionTitle>详细设置</SectionTitle>
      <div className="pb-[3px]">
        <Check label="参照尺寸" />
        <Check label="创建圆或圆弧的直径尺寸" checked disabled />
        <Check label="在距离尺寸中添加  Φ  标记" disabled />
        <Check label="定义两条线之间的角度尺寸" disabled />
      </div>
      <SectionTitle>尺寸值变更</SectionTitle>
      <div className="pb-[3px]">
        <Check label="尺寸值变更" checked />
      </div>
      <SectionTitle>导航信息</SectionTitle>
      <p className="pl-[13px] leading-[19px] font-bold text-[#484848]">
        请选择对象1。
        <br />
        (已输入/最小/最大=0/1/1)
      </p>
    </div>
  </div>
);

const Workspace = () => (
  <main className="flex min-w-0 flex-1 flex-col">
    <div className="flex-1 border border-r-0 border-[#9a9a9a] bg-white pt-1 pb-[3px] pl-[3px]">
      <div className="relative h-full overflow-hidden bg-[#484848]">
        <SketchView />
        <ViewToolbar />
        <DimensionDialog />
      </div>
    </div>
    <div className="h-7 bg-[#e4e4e4] pl-[3px]">
      <button className="h-[26px] border border-t-0 border-[#9a9a9a] bg-[#fbfbfb] px-2 font-bold whitespace-nowrap text-[#484848]">[1] 草图1</button>
    </div>
  </main>
);

const StatusBar = () => (
  <footer className="bg-[#ececec] text-[#444]">
    <div className="flex h-[33px] items-center justify-end overflow-hidden">
      <input aria-label="命令" className="h-[27px] w-[858px] border border-r-0 border-[#3f6145] bg-[#ececec] px-1 outline-none" />
    </div>
    <div className="flex h-[25px] items-center justify-end bg-[#f0f0f0] pr-[13px] text-[#4a4a4a]">
      <span className="w-[319px]">尺寸定义</span>
      <span className="w-[37px]">X =</span>
      <span className="w-[56px]">19.819,</span>
      <span className="w-[41px]">Y =</span>
      <span className="w-[50px]">5.398,</span>
      <span>Z =</span>
    </div>
  </footer>
);

export default function App() {
  return (
    <div className="flex h-screen flex-col overflow-hidden bg-[#e4e4e4] font-['Noto_Sans_CJK_SC',sans-serif] text-[15px]">
      <TitleBar />
      <Ribbon />
      <EnvironmentBar />
      <div className="flex min-h-0 flex-1">
        <SidePanel />
        <Workspace />
      </div>
      <StatusBar />
      <div className="h-[50px] shrink-0 bg-[#1c4b6c]" />
    </div>
  );
}
